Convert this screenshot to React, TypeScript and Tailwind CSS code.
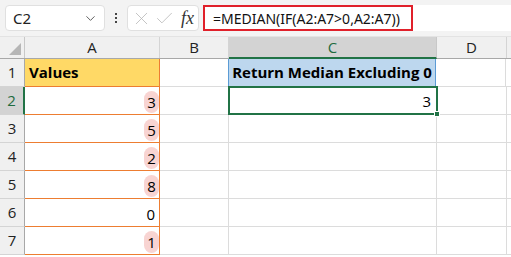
import { ChevronDown, X, Check } from 'lucide-react';

const cols = [
  { key: 'A', w: 135 },
  { key: 'B', w: 69 },
  { key: 'C', w: 208 },
  { key: 'D', w: 70 },
];

const values = [3, 5, 2, 8, 0, 1];

const cellFont = { fontFamily: '"Open Sans", "Liberation Sans", sans-serif' };

function Toolbar() {
  return (
    <div className="h-[37px] bg-[#f3f3f3] flex items-start pt-[5px] pl-[5px] border-b border-[#e3e3e3]">
      <div className="w-[100px] h-[26px] bg-white border border-[#e0e0e0] rounded-[4px] flex items-center justify-between pl-[7px] pr-[6px]">
        <span className="text-[15px] text-[#222]" style={{ fontFamily: '"Noto Sans", sans-serif' }}>C2</span>
        <ChevronDown size={15} strokeWidth={1.5} className="text-[#555]" />
      </div>
      <div className="w-[22px] h-[26px] flex flex-col items-center justify-center gap-[2px]">
        <div className="w-[2px] h-[2px] bg-[#444]" />
        <div className="w-[2px] h-[2px] bg-[#444]" />
        <div className="w-[2px] h-[2px] bg-[#444]" />
      </div>
      <div className="w-[72px] h-[26px] bg-white border border-[#e0e0e0] rounded-[4px] flex items-center pl-[3px] gap-[2px]">
        <X size={21} strokeWidth={0.9} className="text-[#b5b5b5]" />
        <Check size={21} strokeWidth={0.9} className="text-[#b5b5b5]" />
        <span className="ml-[4px] text-[18px] italic text-[#333]" style={{ fontFamily: '"Liberation Serif", serif' }}>fx</span>
      </div>
      <div className="ml-[4px] flex-1 h-[26px] bg-white flex items-center">
        <div className="w-[210px] h-[26px] border-2 border-[#e0202a] flex items-center pl-[8px]">
          <span className="text-[14px] text-[#111]" style={{ fontFamily: '"Noto Sans", sans-serif' }}>=MEDIAN(IF(A2:A7&gt;0,A2:A7))</span>
        </div>
      </div>
    </div>
  );
}

function Header() {
  return (
    <div className="flex h-[22px] bg-[#f0f0f0] border-b border-[#a8a8a8]">
      <div className="w-[25px] border-r border-[#c8c8c8] relative">
        <div
          className="absolute right-[3px] bottom-[3px] w-[12px] h-[12px] bg-[#b6b6b6]"
          style={{ clipPath: 'polygon(100% 0, 100% 100%, 0 100%)' }}
        />
      </div>
      {cols.map((c) => {
        const sel = c.key === 'C';
        return (
          <div
            key={c.key}
            style={{ width: c.w, ...cellFont }}
            className={
              sel
                ? 'flex items-center justify-center text-[15px] bg-[#d3d3d3] text-[#1e6b3f] border-r border-[#c8c8c8] border-b-2 border-b-[#217346] -mb-px'
                : 'flex items-center justify-center text-[15px] text-[#222] border-r border-[#d4d4d4]'
            }
          >
            {c.key}
          </div>
        );
      })}
    </div>
  );
}

function Num({ v }: { v: number }) {
  if (v === 0) return <span className="pr-[3px]">{v}</span>;
  return (
    <span className="inline-flex items-center justify-center w-[15px] h-[22px] rounded-full bg-[#f8d4d2] mr-[-1px]">
      {v}
    </span>
  );
}

function Row({ n }: { n: number }) {
  const selRow = n === 2;
  const isFirst = n === 1;
  const v = values[n - 2];
  return (
    <div className="flex h-[28px]" style={cellFont}>
      <div
        className={
          selRow
            ? 'w-[25px] flex items-center justify-center text-[15px] bg-[#d3d3d3] text-[#1e6b3f] border-r-2 border-[#217346] border-b border-b-[#d4d4d4]'
            : 'w-[25px] flex items-center justify-center text-[15px] bg-[#f0f0f0] text-[#222] border-r border-[#a8a8a8] border-b border-b-[#d4d4d4]'
        }
      >
        {n}
      </div>
      {isFirst ? (
        <div className="w-[135px] bg-[#ffd966] border-r border-b border-[#ed7d31] flex items-center pl-[4px] text-[15px] font-bold text-black">
          Values
        </div>
      ) : (
        <div className="w-[135px] bg-white border-r border-b border-[#ed7d31] flex items-end justify-end pb-[1px] pr-[1px] text-[15px] text-black">
          <Num v={v} />
        </div>
      )}
      <div className="w-[69px] border-r border-b border-[#dcdcdc]" />
      {isFirst ? (
        <div className="w-[208px] bg-[#bdd7ee] border-l border-r border-b border-[#5b9bd5] -ml-px flex items-center justify-center text-[15px] font-bold text-black">
          Return Median Excluding 0
        </div>
      ) : (
        <div className="w-[208px] border-r border-b border-[#dcdcdc] flex items-end justify-end pr-[5px] pb-[2px] text-[15px] text-black">
          {selRow ? 3 : ''}
        </div>
      )}
      <div className="w-[70px] border-r border-b border-[#dcdcdc]" />
      <div className="flex-1 border-b border-[#dcdcdc]" />
    </div>
  );
}

export default function App() {
  return (
    <div className="w-[511px] h-[257px] bg-white overflow-hidden relative">
      <Toolbar />
      <Header />
      {[1, 2, 3, 4, 5, 6, 7].map((n) => (
        <Row key={n} n={n} />
      ))}
      {/* active cell selection */}
      <div className="absolute left-[228px] top-[86px] w-[210px] h-[29px] border-2 border-[#217346] pointer-events-none" />
      <div className="absolute left-[434px] top-[111px] w-[6px] h-[6px] bg-[#217346] border border-white" />
    </div>
  );
}
